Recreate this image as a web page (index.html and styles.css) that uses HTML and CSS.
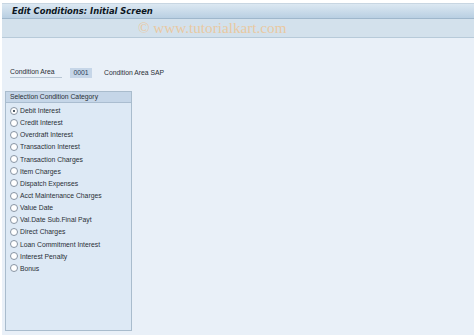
FILE: index.html
```html
<!DOCTYPE html>
<html>
<head>
<meta charset="utf-8">
<link rel="stylesheet" href="styles.css">
</head>
<body>
<div class="screen">
  <div class="titlebar">Edit Conditions: Initial Screen</div>
  <div class="toolbar"><span class="watermark">© www.tutorialkart.com</span></div>
  <div class="content">
    <div class="field-row">
      <span class="label">Condition Area</span>
      <span class="input">0001</span>
      <span class="desc">Condition Area SAP</span>
    </div>
    <div class="group">
      <div class="group-head">Selection Condition Category</div>
      <div class="group-body">
        <div class="opt"><span class="radio on"></span>Debit Interest</div>
        <div class="opt"><span class="radio"></span>Credit Interest</div>
        <div class="opt"><span class="radio"></span>Overdraft Interest</div>
        <div class="opt"><span class="radio"></span>Transaction Interest</div>
        <div class="opt"><span class="radio"></span>Transaction Charges</div>
        <div class="opt"><span class="radio"></span>Item Charges</div>
        <div class="opt"><span class="radio"></span>Dispatch Expenses</div>
        <div class="opt"><span class="radio"></span>Acct Maintenance Charges</div>
        <div class="opt"><span class="radio"></span>Value Date</div>
        <div class="opt"><span class="radio"></span>Val.Date Sub.Final Payt</div>
        <div class="opt"><span class="radio"></span>Direct Charges</div>
        <div class="opt"><span class="radio"></span>Loan Commitment Interest</div>
        <div class="opt"><span class="radio"></span>Interest Penalty</div>
        <div class="opt"><span class="radio"></span>Bonus</div>
      </div>
    </div>
  </div>
</div>
</body>
</html>
```
FILE: styles.css
```css
html, body {
  margin: 0;
  padding: 0;
  background: #ffffff;
}
.screen {
  width: 474px;
  height: 335px;
  padding-top: 3px;
  box-sizing: border-box;
  display: flex;
  flex-direction: column;
  font-family: "Liberation Sans", Arial, sans-serif;
  color: #2a2f36;
}
.titlebar {
  height: 16px;
  margin-left: 2px;
  box-sizing: border-box;
  padding-left: 10px;
  line-height: 15px;
  font-family: "DejaVu Sans", "Liberation Sans", sans-serif;
  font-weight: bold;
  font-style: italic;
  font-size: 8.4px;
  color: #0c1622;
  background: linear-gradient(#dce8f2, #b9cfe2);
  border-top: 1px solid #c8d6e2;
  border-bottom: 1px solid #9fb7cc;
}
.toolbar {
  height: 19px;
  margin-left: 2px;
  box-sizing: border-box;
  background: #d3e1ec;
  border-bottom: 1px solid #b7cad9;
  display: flex;
  align-items: center;
  padding-left: 136px;
}
.watermark {
  font-family: "Liberation Serif", "Times New Roman", serif;
  font-size: 15.2px;
  color: #e9c9a2;
}
.content {
  flex: 1;
  margin-left: 2px;
  background: #e9f0f8;
  padding: 29px 0 4px 3px;
  display: flex;
  flex-direction: column;
}
.field-row {
  display: flex;
  align-items: center;
  height: 11px;
  font-size: 6.8px;
  padding-left: 5px;
}
.label {
  width: 52px;
  border-bottom: 1px solid #b8c6d4;
  line-height: 10px;
}
.input {
  margin-left: 8px;
  width: 22px;
  height: 10px;
  line-height: 10px;
  text-align: center;
  background: #c6d6e8;
  color: #2a3f5a;
}
.desc {
  margin-left: 12px;
}
.group {
  margin-top: 13px;
  width: 127px;
  flex: 1;
  display: flex;
  flex-direction: column;
  border: 1px solid #a9bccd;
  box-sizing: border-box;
}
.group-head {
  height: 10px;
  line-height: 10px;
  font-size: 6.8px;
  padding-left: 4px;
  background: #c5d6e8;
  border-bottom: 1px solid #aabdd0;
}
.group-body {
  flex: 1;
  background: #dde9f5;
  padding: 1.5px 0 0 4px;
}
.opt {
  display: flex;
  align-items: center;
  height: 12.15px;
  font-size: 6.8px;
}
.radio {
  width: 6px;
  height: 6px;
  border: 1px solid #8794a3;
  border-radius: 50%;
  background: #ffffff;
  margin-right: 2px;
  box-sizing: content-box;
  position: relative;
}
.radio.on::after {
  content: "";
  position: absolute;
  left: 2px;
  top: 2px;
  width: 2px;
  height: 2px;
  border-radius: 50%;
  background: #1a2a3a;
}
```
